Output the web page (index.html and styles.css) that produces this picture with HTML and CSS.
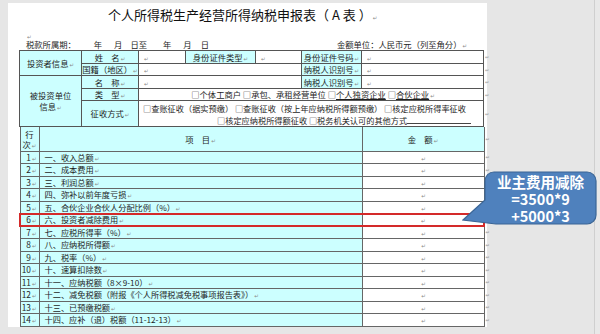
FILE: index.html
```html
<!DOCTYPE html>
<html lang="zh-CN">
<head>
<meta charset="utf-8">
<title>个人所得税生产经营所得纳税申报表（A表）</title>
<link rel="stylesheet" href="styles.css">
</head>
<body>
<div class="page">
  <div class="title">个人所得税生产经营所得纳税申报表（ A 表 ）<span class="pm">↵</span></div>
  <div class="blank"><span class="pm">↵</span></div>
  <div class="period">
    <span>税款所属期：</span>
    <span class="g18">年</span>
    <span class="g12">月</span>
    <span class="g8">日至</span>
    <span class="g16">年</span>
    <span class="g12">月</span>
    <span class="g9">日</span>
    <span class="unit">金额单位：人民币元（列至角分）<span class="pm">↵</span></span>
  </div>
  <table class="info">
    <colgroup>
      <col class="c1"><col class="c2"><col class="c3"><col class="c4"><col class="c5"><col class="c6"><col class="c7"><col class="ceol">
    </colgroup>
    <tr class="h13">
      <td class="lab" rowspan="2">投资者信息<span class="pm">↵</span></td>
      <td class="lab">姓　名<span class="pm">↵</span></td>
      <td class="val"><span class="pm">↵</span></td>
      <td class="lab">身份证件类型<span class="pm">↵</span></td>
      <td class="val"><span class="pm">↵</span></td>
      <td class="lab">身份证件号码<span class="pm">↵</span></td>
      <td class="val"><span class="pm">↵</span></td>
      <td class="eol">↵</td>
    </tr>
    <tr class="h12">
      <td class="lab">国籍（地区）<span class="pm">↵</span></td>
      <td class="val" colspan="3"><span class="pm">↵</span></td>
      <td class="lab">纳税人识别号<span class="pm">↵</span></td>
      <td class="val"><span class="pm">↵</span></td>
      <td class="eol">↵</td>
    </tr>
    <tr class="h13">
      <td class="lab" rowspan="3">被投资单位<br>信息<span class="pm">↵</span></td>
      <td class="lab">名　称<span class="pm">↵</span></td>
      <td class="val" colspan="3"><span class="pm">↵</span></td>
      <td class="lab">纳税人识别号<span class="pm">↵</span></td>
      <td class="val"><span class="pm">↵</span></td>
      <td class="eol">↵</td>
    </tr>
    <tr class="h12">
      <td class="lab">类　型<span class="pm">↵</span></td>
      <td class="opts" colspan="5">□个体工商户 □承包、承租经营单位 □<span class="ul">个人独资企业</span> □<span class="ul">合伙企业</span><span class="pm">↵</span></td>
      <td class="eol">↵</td>
    </tr>
    <tr class="h26">
      <td class="lab">征收方式<span class="pm">↵</span></td>
      <td class="modes" colspan="5">
        <div class="mode-line">□查账征收（据实预缴） □查账征收（按上年应纳税所得额预缴） □核定应税所得率征收</div>
        <div class="mode-line second">□核定应纳税所得额征收 □税务机关认可的其他方式<span class="blankline"></span></div>
      </td>
      <td class="eol">↵</td>
    </tr>
  </table>
  <table class="items">
    <colgroup>
      <col class="m1"><col class="m2"><col class="m3"><col class="ceol">
    </colgroup>
    <tr class="head">
      <td class="lab">行<br>次<span class="pm">↵</span></td>
      <td class="lab">项　目<span class="pm">↵</span></td>
      <td class="lab">金　额<span class="pm">↵</span></td>
      <td class="eol">↵</td>
    </tr>
    <tr><td class="lab num">1<span class="pm">↵</span></td><td class="lab item">一、收入总额<span class="pm">↵</span></td><td class="amt"><span class="pm">↵</span></td><td class="eol">↵</td></tr>
    <tr><td class="lab num">2<span class="pm">↵</span></td><td class="lab item">二、成本费用<span class="pm">↵</span></td><td class="amt"><span class="pm">↵</span></td><td class="eol">↵</td></tr>
    <tr><td class="lab num">3<span class="pm">↵</span></td><td class="lab item">三、利润总额<span class="pm">↵</span></td><td class="amt"><span class="pm">↵</span></td><td class="eol">↵</td></tr>
    <tr><td class="lab num">4<span class="pm">↵</span></td><td class="lab item">四、弥补以前年度亏损<span class="pm">↵</span></td><td class="amt"><span class="pm">↵</span></td><td class="eol">↵</td></tr>
    <tr><td class="lab num">5<span class="pm">↵</span></td><td class="lab item">五、合伙企业合伙人分配比例（%）<span class="pm">↵</span></td><td class="amt"><span class="pm">↵</span></td><td class="eol">↵</td></tr>
    <tr class="hl"><td class="lab num">6<span class="pm">↵</span></td><td class="lab item">六、投资者减除费用<span class="pm">↵</span></td><td class="amt"><span class="pm">↵</span></td><td class="eol">↵</td></tr>
    <tr><td class="lab num">7<span class="pm">↵</span></td><td class="lab item">七、应税所得率（%）<span class="pm">↵</span></td><td class="amt"><span class="pm">↵</span></td><td class="eol">↵</td></tr>
    <tr><td class="lab num">8<span class="pm">↵</span></td><td class="lab item">八、应纳税所得额<span class="pm">↵</span></td><td class="amt"><span class="pm">↵</span></td><td class="eol">↵</td></tr>
    <tr><td class="lab num">9<span class="pm">↵</span></td><td class="lab item">九、税率（%）<span class="pm">↵</span></td><td class="amt"><span class="pm">↵</span></td><td class="eol">↵</td></tr>
    <tr><td class="lab num">10<span class="pm">↵</span></td><td class="lab item">十、速算扣除数<span class="pm">↵</span></td><td class="amt"><span class="pm">↵</span></td><td class="eol">↵</td></tr>
    <tr><td class="lab num">11<span class="pm">↵</span></td><td class="lab item">十一、应纳税额（8×9-10）<span class="pm">↵</span></td><td class="amt"><span class="pm">↵</span></td><td class="eol">↵</td></tr>
    <tr><td class="lab num">12<span class="pm">↵</span></td><td class="lab item">十二、减免税额（附报《个人所得税减免税事项报告表》）<span class="pm">↵</span></td><td class="amt"><span class="pm">↵</span></td><td class="eol">↵</td></tr>
    <tr><td class="lab num">13<span class="pm">↵</span></td><td class="lab item">十三、已预缴税额<span class="pm">↵</span></td><td class="amt"><span class="pm">↵</span></td><td class="eol">↵</td></tr>
    <tr><td class="lab num">14<span class="pm">↵</span></td><td class="lab item">十四、应补（退）税额（11-12-13）<span class="pm">↵</span></td><td class="amt"><span class="pm">↵</span></td><td class="eol">↵</td></tr>
  </table>
</div>
<div class="callout">
  <svg class="callout-shape" width="136" height="57" viewBox="0 0 136 57">
    <path d="M32 2 H125 A9 9 0 0 1 134 11 V45 A9 9 0 0 1 125 54 H34 L1 50 L23 30 V11 A9 9 0 0 1 32 2 Z" fill="#4f81bd" stroke="#3a6596" stroke-width="1.2"/>
  </svg>
  <div class="callout-text">
    <div class="cl">业主费用减除</div>
    <div class="cl">=3500*9</div>
    <div class="cl">+5000*3</div>
  </div>
</div>
</body>
</html>
```

FILE: styles.css
```css
html, body {
  margin: 0;
  padding: 0;
}

body {
  width: 600px;
  height: 334px;
  overflow: hidden;
  position: relative;
  background: linear-gradient(to right, #e6e6e6 0, #e6e6e6 594px, #cfcfcf 594px, #cfcfcf 595px, #e8e8e8 595px);
  font-family: "Noto Sans CJK SC", "Noto Sans", sans-serif;
  color: #1e1e1e;
}

.page {
  margin: 3px 0 0 8px;
  width: 479px;
  height: 324px;
  padding-left: 11px;
  box-sizing: border-box;
  background: #fff;
}

.pm {
  font-family: "DejaVu Sans", sans-serif;
  font-size: 5.5px;
  line-height: 0;
  color: #8a8a8a;
  margin-left: 1px;
}

.title {
  height: 24px;
  line-height: 24px;
  font-size: 13px;
  padding-left: 89px;
  white-space: nowrap;
  color: #111;
}

.blank {
  height: 10px;
  line-height: 10px;
  padding-left: 7px;
}

.blank .pm {
  line-height: 10px;
}

.period {
  display: flex;
  align-items: center;
  height: 13px;
  line-height: 10px;
  padding-left: 7px;
  font-size: 8.3px;
  white-space: nowrap;
}

.g18 { margin-left: 18px; }
.g16 { margin-left: 16px; }
.g12 { margin-left: 12px; }
.g9 { margin-left: 9px; }
.g8 { margin-left: 8px; }
.unit { margin-left: 128px; }

table {
  border-collapse: collapse;
  table-layout: fixed;
  width: 468px;
  font-size: 8.3px;
  line-height: 9px;
}

td {
  border: 1px solid #555;
  padding: 0;
  vertical-align: middle;
  white-space: nowrap;
  overflow: hidden;
}

td.eol {
  border: none;
  overflow: visible;
  font-family: "DejaVu Sans", sans-serif;
  font-size: 5px;
  line-height: 0;
  color: #9a9a9a;
  padding-left: 1px;
}

.c1 { width: 62px; }
.c2 { width: 57px; }
.c3 { width: 47px; }
.c4 { width: 70px; }
.c5 { width: 46px; }
.c6 { width: 60px; }
.c7 { width: 122px; }
.ceol { width: 4px; }

.m1 { width: 19px; }
.m2 { width: 323px; }
.m3 { width: 122px; }

.h12 { height: 12px; }
.h13 { height: 13px; }
.h26 { height: 26px; }

.lab {
  background: #ccffff;
  text-align: center;
}

.info .lab[rowspan="3"] {
  line-height: 11px;
}

.val {
  background: #fff;
  padding-left: 4px;
}

.opts {
  text-align: center;
  padding-left: 4px;
}

.ul {
  text-decoration: underline;
}

.modes {
  padding-left: 4px;
}

.mode-line {
  height: 12px;
  line-height: 12px;
  font-size: 8.2px;
}

.mode-line.second {
  padding-left: 74px;
}

.blankline {
  display: inline-block;
  width: 64px;
  height: 7px;
  border-bottom: 1px solid #444;
  vertical-align: baseline;
}

.items .head {
  height: 24px;
}

.items .head td {
  border-top: none;
  line-height: 10px;
}

.items tr {
  height: 12.5px;
}

.items td {
  border-color: #666;
}

.num {
  text-align: right;
  padding-right: 2px;
}

.item {
  text-align: left;
  padding-left: 5px;
  font-size: 8.2px;
}

.amt {
  background: #fff;
  text-align: center;
}

.items tr.hl td {
  border-top: 2px solid #d42a2a;
  border-bottom: 2px solid #d42a2a;
}

.items tr.hl td:first-child {
  border-left: 2px solid #d42a2a;
}

.items tr.hl td.amt {
  border-right: 2px solid #d42a2a;
}

.items tr.hl td.eol {
  border: none;
}

.callout {
  position: absolute;
  left: 462px;
  top: 170px;
  width: 136px;
  height: 57px;
}

.callout-shape {
  position: absolute;
  left: 0;
  top: 0;
  display: block;
}

.callout-text {
  position: absolute;
  left: 23px;
  top: 2px;
  width: 111px;
  height: 52px;
  display: flex;
  flex-direction: column;
  align-items: center;
  justify-content: center;
  color: #fff;
  font-weight: 700;
  font-size: 14.5px;
  white-space: nowrap;
}

.cl {
  height: 17px;
  line-height: 17px;
}
```
